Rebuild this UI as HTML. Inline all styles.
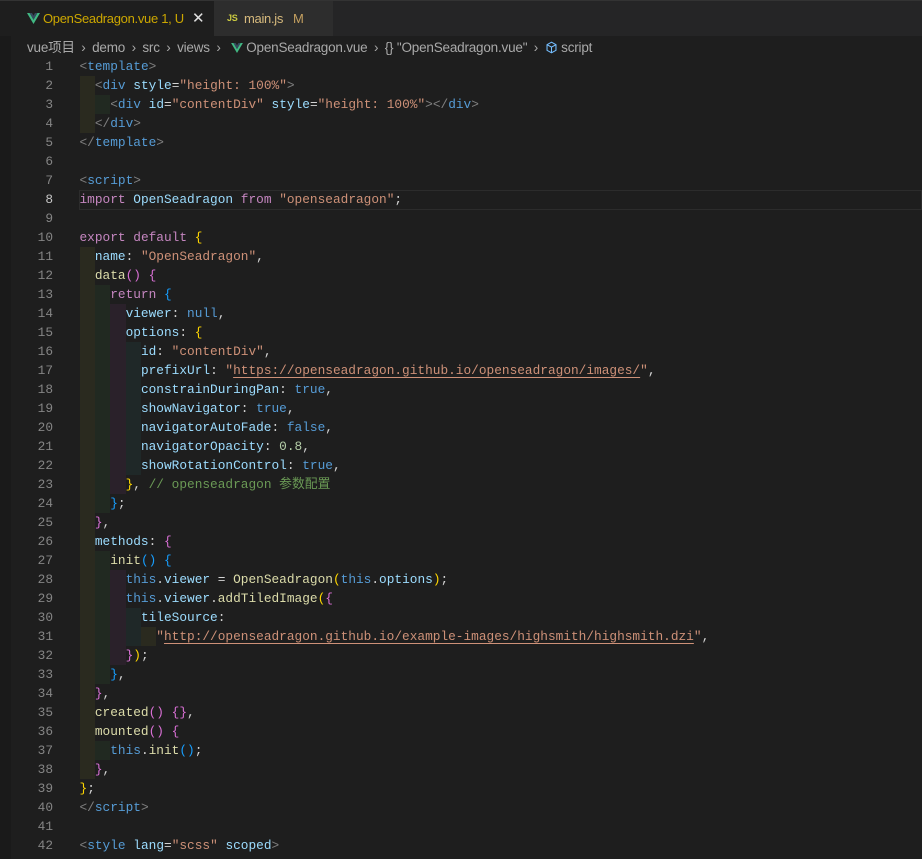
<!DOCTYPE html>
<html><head><meta charset="utf-8"><style>
*{margin:0;padding:0;box-sizing:border-box}
body{width:922px;height:859px;background:#1e1e1e;overflow:hidden;position:relative;font-family:"Liberation Sans","Noto Sans CJK SC",sans-serif}
.tabs{position:absolute;left:0;top:0;width:922px;height:36px;background:#252526;border-top:1px solid #333}
.tab{position:absolute;top:0;height:35px;font-size:13px;line-height:35px;letter-spacing:-0.3px;white-space:nowrap}
.t1{left:0;width:214px;background:#1e1e1e;color:#cca700}
.t2{left:214px;width:119px;background:#2d2d2d;color:#d7ba7d}
.bc{position:absolute;left:27px;top:38px;height:19px;font-size:13.5px;color:#a9a9a9;line-height:19px;white-space:pre;letter-spacing:-0.2px}
.sep{display:inline-block;margin:0 6.5px;color:#a9a9a9}
.strip{position:absolute;left:0;top:36px;width:11px;height:823px;background:#1a1a1a}
.code{position:absolute;left:0;top:57px;width:922px;font-family:"Liberation Mono","Noto Sans CJK SC",monospace;font-size:12.8px;line-height:19px}
.l{height:19px;white-space:pre;position:relative}
.n{display:inline-block;width:53px;text-align:right;color:#858585;margin-right:26.5px}
.curbox{position:absolute;left:79px;top:190px;width:843px;height:20px;border:1px solid #2c2c2c}
.cur .n{color:#c6c6c6}
i{font-style:normal;display:inline-block;height:19px;vertical-align:top}
.a{background:#2a2a1f}.b{background:#212921}.c{background:#2a212a}.d{background:#1f2828}
.p{color:#808080}.t{color:#569cd6}.at{color:#9cdcfe}.s{color:#ce9178}.k{color:#c586c0}.v{color:#9cdcfe}.w{color:#d4d4d4}.f{color:#dcdcaa}.nm{color:#b5cea8}.cm{color:#6a9955}
.g{color:#ffd700}.o{color:#da70d6}.bl{color:#179fff}
.u{text-decoration:underline;text-decoration-color:#ce9178;text-underline-offset:3px}
</style></head><body>
<div class="tabs">
<div class="tab t1"><svg style="position:absolute;left:27px;top:12px" width="13" height="11" viewBox="0 0 13 11"><path d="M0 0h2.6l3.9 6.8L10.4 0H13L6.5 11z" fill="#41b883"/><path d="M2.6 0h2.4l1.5 2.6L8 0h2.4L6.5 6.8z" fill="#35495e"/></svg><span style="position:absolute;left:43px">OpenSeadragon.vue 1, U</span><span style="position:absolute;left:192px;color:#e0e0e0;font-size:15px">✕</span></div>
<div class="tab t2"><span style="position:absolute;left:13px;font-size:9px;font-weight:bold;color:#cbcb41">JS</span><span style="position:absolute;left:30px">main.js</span><span style="position:absolute;left:79px;color:#c4a060">M</span></div>
</div>
<div class="strip"></div>
<div class="bc">vue项目<span class="sep">›</span>demo<span class="sep">›</span>src<span class="sep">›</span>views<span class="sep">›</span> <svg width="12" height="10" viewBox="0 0 13 11" style="vertical-align:-1px"><path d="M0 0h2.6l3.9 6.8L10.4 0H13L6.5 11z" fill="#41b883"/><path d="M2.6 0h2.4l1.5 2.6L8 0h2.4L6.5 6.8z" fill="#35495e"/></svg> OpenSeadragon.vue<span class="sep">›</span>{} "OpenSeadragon.vue"<span class="sep">›</span><svg width="13" height="13" viewBox="0 0 16 16" style="vertical-align:-2px"><path d="M8 1.5l5.5 3v7L8 14.5l-5.5-3v-7z M2.5 4.5L8 7.5l5.5-3 M8 7.5v7" fill="none" stroke="#75beff" stroke-width="1.3"/></svg> script</div>
<div class="curbox"></div>
<div class="code">
<div class="l"><span class="n">1</span><span class="p">&lt;</span><span class="t">template</span><span class="p">&gt;</span></div>
<div class="l"><span class="n">2</span><i class="a">  </i><span class="p">&lt;</span><span class="t">div</span> <span class="at">style</span><span class="w">=</span><span class="s">"height: 100%"</span><span class="p">&gt;</span></div>
<div class="l"><span class="n">3</span><i class="a">  </i><i class="b">  </i><span class="p">&lt;</span><span class="t">div</span> <span class="at">id</span><span class="w">=</span><span class="s">"contentDiv"</span> <span class="at">style</span><span class="w">=</span><span class="s">"height: 100%"</span><span class="p">&gt;&lt;/</span><span class="t">div</span><span class="p">&gt;</span></div>
<div class="l"><span class="n">4</span><i class="a">  </i><span class="p">&lt;/</span><span class="t">div</span><span class="p">&gt;</span></div>
<div class="l"><span class="n">5</span><span class="p">&lt;/</span><span class="t">template</span><span class="p">&gt;</span></div>
<div class="l"><span class="n">6</span></div>
<div class="l"><span class="n">7</span><span class="p">&lt;</span><span class="t">script</span><span class="p">&gt;</span></div>
<div class="l cur"><span class="n">8</span><span class="k">import</span> <span class="v">OpenSeadragon</span> <span class="k">from</span> <span class="s">"openseadragon"</span><span class="w">;</span></div>
<div class="l"><span class="n">9</span></div>
<div class="l"><span class="n">10</span><span class="k">export</span> <span class="k">default</span> <span class="g">{</span></div>
<div class="l"><span class="n">11</span><i class="a">  </i><span class="v">name</span><span class="w">: </span><span class="s">"OpenSeadragon"</span><span class="w">,</span></div>
<div class="l"><span class="n">12</span><i class="a">  </i><span class="f">data</span><span class="o">()</span> <span class="o">{</span></div>
<div class="l"><span class="n">13</span><i class="a">  </i><i class="b">  </i><span class="k">return</span> <span class="bl">{</span></div>
<div class="l"><span class="n">14</span><i class="a">  </i><i class="b">  </i><i class="c">  </i><span class="v">viewer</span><span class="w">: </span><span class="t">null</span><span class="w">,</span></div>
<div class="l"><span class="n">15</span><i class="a">  </i><i class="b">  </i><i class="c">  </i><span class="v">options</span><span class="w">: </span><span class="g">{</span></div>
<div class="l"><span class="n">16</span><i class="a">  </i><i class="b">  </i><i class="c">  </i><i class="d">  </i><span class="v">id</span><span class="w">: </span><span class="s">"contentDiv"</span><span class="w">,</span></div>
<div class="l"><span class="n">17</span><i class="a">  </i><i class="b">  </i><i class="c">  </i><i class="d">  </i><span class="v">prefixUrl</span><span class="w">: </span><span class="s">"<span class="u">https://openseadragon.github.io/openseadragon/images/</span>"</span><span class="w">,</span></div>
<div class="l"><span class="n">18</span><i class="a">  </i><i class="b">  </i><i class="c">  </i><i class="d">  </i><span class="v">constrainDuringPan</span><span class="w">: </span><span class="t">true</span><span class="w">,</span></div>
<div class="l"><span class="n">19</span><i class="a">  </i><i class="b">  </i><i class="c">  </i><i class="d">  </i><span class="v">showNavigator</span><span class="w">: </span><span class="t">true</span><span class="w">,</span></div>
<div class="l"><span class="n">20</span><i class="a">  </i><i class="b">  </i><i class="c">  </i><i class="d">  </i><span class="v">navigatorAutoFade</span><span class="w">: </span><span class="t">false</span><span class="w">,</span></div>
<div class="l"><span class="n">21</span><i class="a">  </i><i class="b">  </i><i class="c">  </i><i class="d">  </i><span class="v">navigatorOpacity</span><span class="w">: </span><span class="nm">0.8</span><span class="w">,</span></div>
<div class="l"><span class="n">22</span><i class="a">  </i><i class="b">  </i><i class="c">  </i><i class="d">  </i><span class="v">showRotationControl</span><span class="w">: </span><span class="t">true</span><span class="w">,</span></div>
<div class="l"><span class="n">23</span><i class="a">  </i><i class="b">  </i><i class="c">  </i><span class="g">}</span><span class="w">, </span><span class="cm">// openseadragon 参数配置</span></div>
<div class="l"><span class="n">24</span><i class="a">  </i><i class="b">  </i><span class="bl">}</span><span class="w">;</span></div>
<div class="l"><span class="n">25</span><i class="a">  </i><span class="o">}</span><span class="w">,</span></div>
<div class="l"><span class="n">26</span><i class="a">  </i><span class="v">methods</span><span class="w">: </span><span class="o">{</span></div>
<div class="l"><span class="n">27</span><i class="a">  </i><i class="b">  </i><span class="f">init</span><span class="bl">()</span> <span class="bl">{</span></div>
<div class="l"><span class="n">28</span><i class="a">  </i><i class="b">  </i><i class="c">  </i><span class="t">this</span><span class="w">.</span><span class="v">viewer</span><span class="w"> = </span><span class="f">OpenSeadragon</span><span class="g">(</span><span class="t">this</span><span class="w">.</span><span class="v">options</span><span class="g">)</span><span class="w">;</span></div>
<div class="l"><span class="n">29</span><i class="a">  </i><i class="b">  </i><i class="c">  </i><span class="t">this</span><span class="w">.</span><span class="v">viewer</span><span class="w">.</span><span class="f">addTiledImage</span><span class="g">(</span><span class="o">{</span></div>
<div class="l"><span class="n">30</span><i class="a">  </i><i class="b">  </i><i class="c">  </i><i class="d">  </i><span class="v">tileSource</span><span class="w">:</span></div>
<div class="l"><span class="n">31</span><i class="a">  </i><i class="b">  </i><i class="c">  </i><i class="d">  </i><i class="a">  </i><span class="s">"<span class="u">http://openseadragon.github.io/example-images/highsmith/highsmith.dzi</span>"</span><span class="w">,</span></div>
<div class="l"><span class="n">32</span><i class="a">  </i><i class="b">  </i><i class="c">  </i><span class="o">}</span><span class="g">)</span><span class="w">;</span></div>
<div class="l"><span class="n">33</span><i class="a">  </i><i class="b">  </i><span class="bl">}</span><span class="w">,</span></div>
<div class="l"><span class="n">34</span><i class="a">  </i><span class="o">}</span><span class="w">,</span></div>
<div class="l"><span class="n">35</span><i class="a">  </i><span class="f">created</span><span class="o">()</span> <span class="o">{}</span><span class="w">,</span></div>
<div class="l"><span class="n">36</span><i class="a">  </i><span class="f">mounted</span><span class="o">()</span> <span class="o">{</span></div>
<div class="l"><span class="n">37</span><i class="a">  </i><i class="b">  </i><span class="t">this</span><span class="w">.</span><span class="f">init</span><span class="bl">()</span><span class="w">;</span></div>
<div class="l"><span class="n">38</span><i class="a">  </i><span class="o">}</span><span class="w">,</span></div>
<div class="l"><span class="n">39</span><span class="g">}</span><span class="w">;</span></div>
<div class="l"><span class="n">40</span><span class="p">&lt;/</span><span class="t">script</span><span class="p">&gt;</span></div>
<div class="l"><span class="n">41</span></div>
<div class="l"><span class="n">42</span><span class="p">&lt;</span><span class="t">style</span> <span class="at">lang</span><span class="w">=</span><span class="s">"scss"</span> <span class="at">scoped</span><span class="p">&gt;</span></div>
</div>
</body></html>
